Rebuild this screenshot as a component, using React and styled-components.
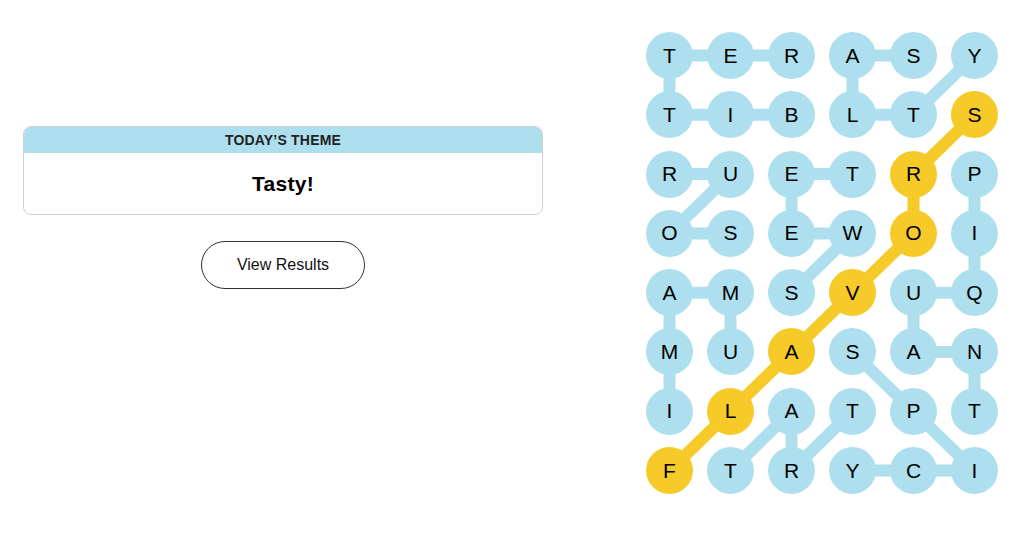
import React from "react";
import styled, { createGlobalStyle } from "styled-components";

const Global = createGlobalStyle`
  html, body { margin: 0; padding: 0; background: #fff; }
  body { font-family: "Liberation Sans", Arial, sans-serif; color: #000; }
`;

const BLUE = "#aedfee";
const YELLOW = "#f6ca28";

const ROWS = [
  "TERASY",
  "TIBLTS",
  "RUETRP",
  "OSEWOI",
  "AMSVUQ",
  "MUASAN",
  "ILATPT",
  "FTRYCI",
];

const D = 47;
const CG = 14;
const RG = 12.3;

const words = [
  { cells: [[1, 2], [1, 1], [1, 0], [0, 0], [0, 1], [0, 2]] },
  { cells: [[0, 4], [0, 3], [1, 3], [1, 4], [0, 5]] },
  { cells: [[3, 1], [3, 0], [2, 1], [2, 0]] },
  { cells: [[4, 2], [3, 3], [3, 2], [2, 2], [2, 3]] },
  { cells: [[2, 5], [3, 5], [4, 5], [4, 4], [5, 4], [5, 5], [6, 5]] },
  { cells: [[5, 1], [4, 1], [4, 0], [5, 0], [6, 0]] },
  { cells: [[5, 3], [6, 4], [7, 5], [7, 4], [7, 3]] },
  { cells: [[7, 1], [6, 2], [7, 2], [6, 3]] },
  { cells: [[7, 0], [6, 1], [5, 2], [4, 3], [3, 4], [2, 4], [1, 5]], span: true },
];

const spanSet = new Set(words.find((w) => w.span).cells.map(([r, c]) => `${r}-${c}`));

const Page = styled.main`
  display: flex;
  align-items: flex-start;
  gap: 103px;
  padding: 32px 0 0 23px;
  width: 1024px;
  height: 536px;
  box-sizing: border-box;
`;

const LeftColumn = styled.section`
  width: 520px;
  margin-top: 94px;
  display: flex;
  flex-direction: column;
  align-items: center;
  gap: 26px;
`;

const ThemeCard = styled.div`
  width: 100%;
  box-sizing: border-box;
  border: 1px solid #d0d0d0;
  border-radius: 8px;
  overflow: hidden;
  background: #fff;
`;

const ThemeHeader = styled.div`
  background: ${BLUE};
  height: 26px;
  display: flex;
  align-items: center;
  justify-content: center;
  font-size: 14px;
  font-weight: 700;
  color: #222;
  letter-spacing: 0.2px;
`;

const ThemeBody = styled.div`
  height: 61px;
  display: flex;
  align-items: center;
  justify-content: center;
  font-size: 21px;
  font-weight: 700;
  letter-spacing: 0.3px;
`;

const PillButton = styled.button`
  width: 164px;
  height: 48px;
  border: 1px solid #333;
  border-radius: 24px;
  background: #fff;
  font-family: "Liberation Sans", Arial, sans-serif;
  font-size: 16px;
  color: #111;
  cursor: pointer;
`;

const Board = styled.div`
  position: relative;
  width: ${6 * D + 5 * CG}px;
  height: ${8 * D + 7 * RG}px;
`;

const Lines = styled.svg`
  position: absolute;
  inset: 0;
`;

const LetterGrid = styled.div`
  position: relative;
  display: grid;
  grid-template-columns: repeat(6, ${D}px);
  grid-auto-rows: ${D}px;
  column-gap: ${CG}px;
  row-gap: ${RG}px;
`;

const Letter = styled.button`
  width: ${D}px;
  height: ${D}px;
  border: none;
  border-radius: 50%;
  padding: 0;
  background: ${(p) => (p.$span ? YELLOW : BLUE)};
  font-family: "Liberation Sans", Arial, sans-serif;
  font-size: 21px;
  color: #000;
  display: flex;
  align-items: center;
  justify-content: center;
`;

const cx = (c) => D / 2 + c * (D + CG);
const cy = (r) => D / 2 + r * (D + RG);

export default function App() {
  return (
    <>
      <Global />
      <Page>
        <LeftColumn>
          <ThemeCard>
            <ThemeHeader>TODAY’S THEME</ThemeHeader>
            <ThemeBody>Tasty!</ThemeBody>
          </ThemeCard>
          <PillButton>View Results</PillButton>
        </LeftColumn>
        <Board>
          <Lines width={6 * D + 5 * CG} height={8 * D + 7 * RG}>
            {words.map((w, i) => (
              <polyline
                key={i}
                points={w.cells.map(([r, c]) => `${cx(c)},${cy(r)}`).join(" ")}
                fill="none"
                stroke={w.span ? YELLOW : BLUE}
                strokeWidth={12}
                strokeLinejoin="round"
              />
            ))}
          </Lines>
          <LetterGrid>
            {ROWS.map((row, r) =>
              row.split("").map((ch, c) => (
                <Letter key={`${r}-${c}`} $span={spanSet.has(`${r}-${c}`)}>
                  {ch}
                </Letter>
              ))
            )}
          </LetterGrid>
        </Board>
      </Page>
    </>
  );
}
